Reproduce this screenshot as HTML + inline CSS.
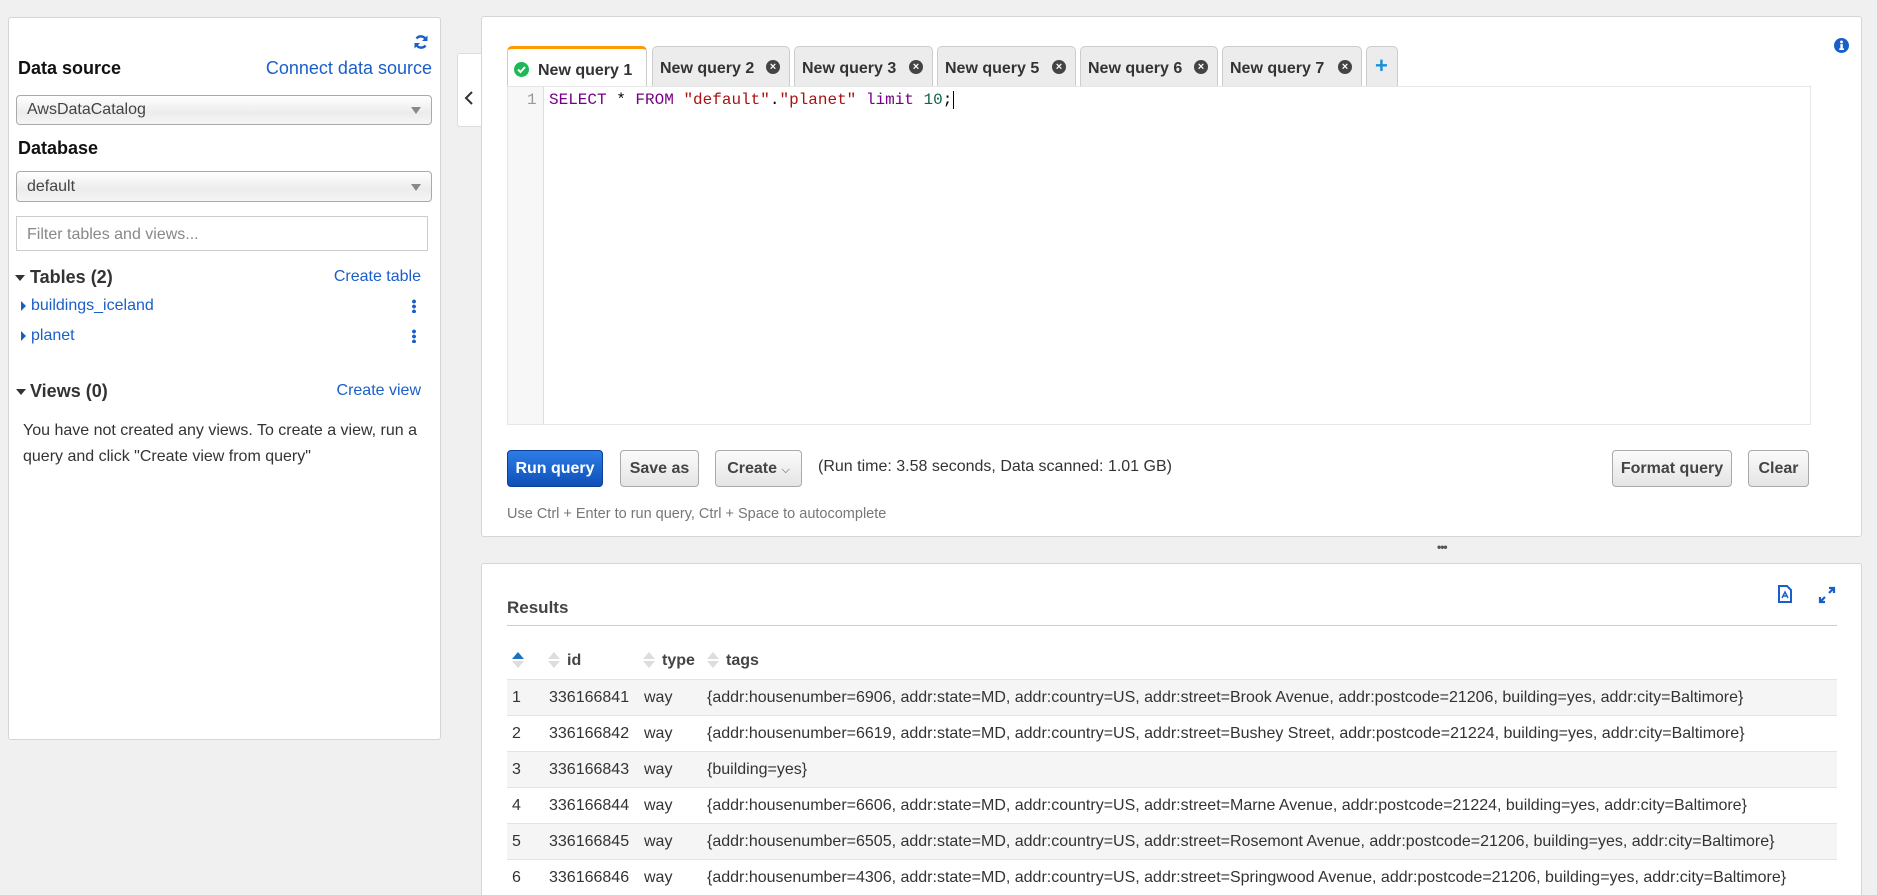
<!DOCTYPE html>
<html style="height:895px;overflow:hidden"><head><meta charset="utf-8"><style>
*{box-sizing:border-box;margin:0;padding:0}
body{width:1877px;height:895px;background:#f0f0f0;font-family:"Liberation Sans",Arial,sans-serif;color:#333;position:relative;overflow:hidden;font-size:16px}
.a{position:absolute;white-space:nowrap}
.panel{position:absolute;background:#fff;border:1px solid #d5d5d5;border-radius:3px}
.link{color:#1a5fc8}
.b{font-weight:bold}
.sel{position:absolute;left:16px;width:416px;border:1px solid #aaa;border-radius:4px;background:linear-gradient(#fff,#ececec 60%,#f5f5f5);font-size:16px;color:#444;padding-left:10px}
.sel:after{content:"";position:absolute;right:10px;top:50%;margin-top:-3px;border-left:5px solid transparent;border-right:5px solid transparent;border-top:7px solid #888}
.tab{position:absolute;top:46px;height:40px;background:#ececec;border:1px solid #ccc;border-bottom:none;border-radius:5px 5px 0 0;font-weight:bold;font-size:16px;color:#333;padding:13px 0 0 7px}
.x{position:absolute;right:9px;top:13px;width:14px;height:14px;border-radius:50%;background:#444;color:#fff;font-size:11px;line-height:14px;text-align:center;font-weight:bold}
.btn{position:absolute;top:450px;height:37px;border:1px solid #aaa;border-radius:4px;background:linear-gradient(#fbfbfb,#e4e4e4);font-weight:bold;font-size:16px;color:#444;text-align:center;line-height:35px}
.row{position:absolute;left:507px;width:1330px;height:36px;border-top:1px solid #e3e3e3;font-size:16px;color:#333}
.row span{position:absolute;top:9px}
.g{background:#f5f5f5}
.sa{position:absolute;width:0;height:0;border-left:6px solid transparent;border-right:6px solid transparent}
</style></head><body>

<div class="panel" style="left:8px;top:17px;width:433px;height:723px"></div>
<svg class="a" style="left:413px;top:34px" width="16" height="16" viewBox="0 0 16 16"><path d="M13 6A5.5 5.5 0 0 0 3.5 4.5M3 10a5.5 5.5 0 0 0 9.5 1.5" fill="none" stroke="#1a5fc8" stroke-width="2.4"/><path d="M14.5 1.5v5.5h-5.5z M1.5 14.5V9h5.5z" fill="#1a5fc8"/></svg>
<div class="a b" style="left:18px;top:58px;font-size:18px;color:#111">Data source</div>
<div class="a link" style="right:1445px;top:58px;font-size:18px">Connect data source</div>
<div class="sel" style="top:95px;height:30px;line-height:28px">AwsDataCatalog</div>
<div class="a b" style="left:18px;top:138px;font-size:18px;color:#111">Database</div>
<div class="sel" style="top:171px;height:31px;line-height:29px">default</div>
<div class="a" style="left:16px;top:216px;width:412px;height:35px;border:1px solid #ccc;color:#888;font-size:16px;padding:9px 0 0 10px">Filter tables and views...</div>
<div class="a" style="left:15px;top:275px;border-left:5px solid transparent;border-right:5px solid transparent;border-top:6px solid #333"></div>
<div class="a b" style="left:30px;top:267px;font-size:18px;color:#333">Tables (2)</div>
<div class="a link" style="right:1456px;top:268px;font-size:16px">Create table</div>
<div class="a" style="left:21px;top:301px;border-top:5px solid transparent;border-bottom:5px solid transparent;border-left:5px solid #1a5fc8"></div>
<div class="a link" style="left:31px;top:297px;font-size:16px">buildings_iceland</div>
<div class="a" style="left:412px;top:299px;width:4px;height:14px;background:radial-gradient(circle,#1a5fc8 1.8px,transparent 2px) 0 0/4px 5px"></div>
<div class="a" style="left:21px;top:331px;border-top:5px solid transparent;border-bottom:5px solid transparent;border-left:5px solid #1a5fc8"></div>
<div class="a link" style="left:31px;top:327px;font-size:16px">planet</div>
<div class="a" style="left:412px;top:329px;width:4px;height:14px;background:radial-gradient(circle,#1a5fc8 1.8px,transparent 2px) 0 0/4px 5px"></div>
<div class="a" style="left:16px;top:389px;border-left:5px solid transparent;border-right:5px solid transparent;border-top:6px solid #333"></div>
<div class="a b" style="left:30px;top:381px;font-size:18px;color:#333">Views (0)</div>
<div class="a link" style="right:1456px;top:382px;font-size:16px">Create view</div>
<div class="a" style="left:23px;top:418px;font-size:16px;color:#333;line-height:26px">You have not created any views. To create a view, run a<br>query and click "Create view from query"</div>

<div class="a" style="left:457px;top:53px;width:26px;height:74px;background:#fff;border:1px solid #ddd;border-right:none;border-radius:3px 0 0 3px"></div>
<svg class="a" style="left:464px;top:90px" width="10" height="16"><path d="M8 2L2 8l6 6" fill="none" stroke="#333" stroke-width="2"/></svg>

<div class="panel" style="left:481px;top:16px;width:1381px;height:521px"></div>
<svg class="a" style="left:1834px;top:38px" width="15" height="15" viewBox="0 0 16 16"><circle cx="8" cy="8" r="8" fill="#1a5fc8"/><rect x="6.8" y="6.5" width="2.6" height="6" fill="#fff"/><rect x="5.6" y="11" width="5" height="1.8" fill="#fff"/><circle cx="8" cy="4.2" r="1.5" fill="#fff"/></svg>

<div class="tab" style="left:507px;width:140px;background:#fff;border-top:3px solid #f90;padding-top:13px;padding-left:30px;height:41px">New query 1</div>
<svg class="a" style="left:514px;top:62px" width="15" height="15"><circle cx="7.5" cy="7.5" r="7.5" fill="#1db954"/><path d="M4 7.5l2.5 2.5 4.5-5" fill="none" stroke="#fff" stroke-width="2"/></svg>
<div class="tab" style="left:652px;width:138px">New query 2<span class="x">×</span></div>
<div class="tab" style="left:794px;width:139px">New query 3<span class="x">×</span></div>
<div class="tab" style="left:937px;width:139px">New query 5<span class="x">×</span></div>
<div class="tab" style="left:1080px;width:138px">New query 6<span class="x">×</span></div>
<div class="tab" style="left:1222px;width:140px">New query 7<span class="x">×</span></div>
<div class="tab" style="left:1366px;width:32px;color:#1a8fd8;font-size:22px;padding:6px 0 0 8px">+</div>

<div class="a" style="left:507px;top:86px;width:1304px;height:339px;border:1px solid #e6e6e6;background:#fff"></div>
<div class="a" style="left:508px;top:87px;width:36px;height:337px;background:#f7f7f7;border-right:1px solid #ddd"></div>
<div class="a" style="left:527px;top:91px;font-family:'Liberation Mono',monospace;font-size:16px;color:#999">1</div>
<div class="a" style="left:549px;top:91px;font-family:'Liberation Mono',monospace;font-size:16px;color:#000"><span style="color:#708">SELECT</span> * <span style="color:#708">FROM</span> <span style="color:#a11">"default"</span>.<span style="color:#a11">"planet"</span> <span style="color:#708">limit</span> <span style="color:#164">10</span>;<span style="border-left:1px solid #000;margin-left:1px"></span></div>

<div class="btn" style="left:507px;width:96px;background:linear-gradient(#2d7de6,#0f4fb8);border-color:#0d3f96;color:#fff">Run query</div>
<div class="btn" style="left:620px;width:79px">Save as</div>
<div class="btn" style="left:715px;width:87px">Create <span style="font-weight:normal;font-size:11px">⌵</span></div>
<div class="a" style="left:818px;top:458px;font-size:16px;color:#333">(Run time: 3.58 seconds, Data scanned: 1.01 GB)</div>
<div class="btn" style="left:1612px;width:120px">Format query</div>
<div class="btn" style="left:1748px;width:61px">Clear</div>
<div class="a" style="left:507px;top:506px;font-size:14.5px;color:#777">Use Ctrl + Enter to run query, Ctrl + Space to autocomplete</div>

<div class="a b" style="left:1437px;top:540px;font-size:12px;color:#555;letter-spacing:-1px">•••</div>

<div class="panel" style="left:481px;top:563px;width:1381px;height:332px;border-bottom:none;border-radius:3px 3px 0 0"></div>
<div class="a b" style="left:507px;top:598px;font-size:17px;color:#444">Results</div>
<svg class="a" style="left:1777px;top:585px" width="16" height="18" viewBox="0 0 16 18"><path d="M2 1h8l4 4v12H2z" fill="none" stroke="#1a5fc8" stroke-width="2"/><path d="M5 13l3-6 3 6M6 11h4" fill="none" stroke="#1a5fc8" stroke-width="1.4"/></svg>
<svg class="a" style="left:1818px;top:586px" width="18" height="18" viewBox="0 0 18 18"><path d="M11 2h5v5M16 2l-5 5M7 16H2v-5M2 16l5-5" fill="none" stroke="#1a5fc8" stroke-width="2.2"/></svg>
<div class="a" style="left:507px;top:625px;width:1330px;height:1px;background:#ccc"></div>

<div class="sa" style="left:512px;top:652px;border-bottom:7px solid #1b72c5"></div>
<div class="sa" style="left:512px;top:661px;border-top:7px solid #ddd"></div>
<div class="sa" style="left:548px;top:652px;border-bottom:7px solid #ddd"></div>
<div class="sa" style="left:548px;top:661px;border-top:7px solid #ddd"></div>
<div class="a b" style="left:567px;top:652px;font-size:16px;color:#444">id</div>
<div class="sa" style="left:643px;top:652px;border-bottom:7px solid #ddd"></div>
<div class="sa" style="left:643px;top:661px;border-top:7px solid #ddd"></div>
<div class="a b" style="left:662px;top:652px;font-size:16px;color:#444">type</div>
<div class="sa" style="left:707px;top:652px;border-bottom:7px solid #ddd"></div>
<div class="sa" style="left:707px;top:661px;border-top:7px solid #ddd"></div>
<div class="a b" style="left:726px;top:652px;font-size:16px;color:#444">tags</div>

<div class="row g" style="top:679px"><span style="left:5px">1</span><span style="left:42px">336166841</span><span style="left:137px">way</span><span style="left:200px">{addr:housenumber=6906, addr:state=MD, addr:country=US, addr:street=Brook Avenue, addr:postcode=21206, building=yes, addr:city=Baltimore}</span></div>
<div class="row" style="top:715px"><span style="left:5px">2</span><span style="left:42px">336166842</span><span style="left:137px">way</span><span style="left:200px">{addr:housenumber=6619, addr:state=MD, addr:country=US, addr:street=Bushey Street, addr:postcode=21224, building=yes, addr:city=Baltimore}</span></div>
<div class="row g" style="top:751px"><span style="left:5px">3</span><span style="left:42px">336166843</span><span style="left:137px">way</span><span style="left:200px">{building=yes}</span></div>
<div class="row" style="top:787px"><span style="left:5px">4</span><span style="left:42px">336166844</span><span style="left:137px">way</span><span style="left:200px">{addr:housenumber=6606, addr:state=MD, addr:country=US, addr:street=Marne Avenue, addr:postcode=21224, building=yes, addr:city=Baltimore}</span></div>
<div class="row g" style="top:823px"><span style="left:5px">5</span><span style="left:42px">336166845</span><span style="left:137px">way</span><span style="left:200px">{addr:housenumber=6505, addr:state=MD, addr:country=US, addr:street=Rosemont Avenue, addr:postcode=21206, building=yes, addr:city=Baltimore}</span></div>
<div class="row" style="top:859px"><span style="left:5px">6</span><span style="left:42px">336166846</span><span style="left:137px">way</span><span style="left:200px">{addr:housenumber=4306, addr:state=MD, addr:country=US, addr:street=Springwood Avenue, addr:postcode=21206, building=yes, addr:city=Baltimore}</span></div>

</body></html>
